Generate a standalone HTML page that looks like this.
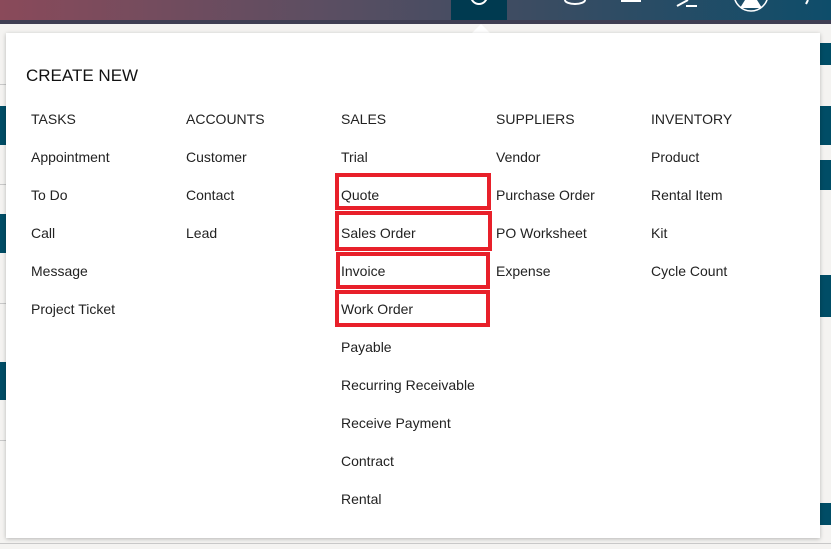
<!DOCTYPE html>
<html><head><meta charset="utf-8"><style>
*{margin:0;padding:0;box-sizing:border-box}
body{width:831px;height:549px;overflow:hidden;background:#f4f3f1;font-family:"Liberation Sans",sans-serif;position:relative}
.top{position:absolute;left:0;top:0;width:831px;height:20px;background:linear-gradient(90deg,#8a4a5a,#5a4e62 40%,#3a4c62 65%,#0e4d6a)}
.strip{position:absolute;left:0;top:20px;width:831px;height:4px;background:#3f3e52}
.act{position:absolute;left:451px;top:0;width:56px;height:20px;background:#003a50}
.b{position:absolute;background:#004d66}
.l{position:absolute;height:1px;background:#c8c8c8}
.pop{position:absolute;left:6px;top:33px;width:814px;height:505px;background:#fff;box-shadow:0 1px 4px rgba(0,0,0,.25)}
.arrow{position:absolute;left:472px;top:24px;width:0;height:0;border-left:9px solid transparent;border-right:9px solid transparent;border-bottom:9px solid #fff}
.t{position:absolute;font-size:14px;color:#222;white-space:nowrap}
h1{position:absolute;left:26px;top:66px;font-size:17px;font-weight:normal;color:#111}
.r{position:absolute;border:4px solid #e8202a}
</style></head><body>
<div class="top"></div><div class="strip"></div><div class="act"></div>
<svg style="position:absolute;left:0;top:0" width="831" height="20">
<g fill="none" stroke="#fff" stroke-width="2">
<path d="M471 -4 A8 8 0 0 0 487 -4"/>
<path d="M565 0 A10 4 0 0 0 585 0"/>
<line x1="621" y1="1" x2="641" y2="1"/>
<path d="M677 6 L688 0 M686 6 L697 6"/>
<ellipse cx="751" cy="-6" rx="17" ry="17" stroke-width="1.5"/>
<path d="M806 4 L808 0"/>
</g>
<path d="M740 8 L745 0 L757 0 L762 8 Z" fill="#fff"/>
</svg>
<div class="b" style="left:0;top:106px;width:8px;height:39px"></div>
<div class="b" style="left:0;top:214px;width:8px;height:39px"></div>
<div class="b" style="left:0;top:362px;width:8px;height:38px"></div>
<div class="b" style="left:820px;top:43px;width:11px;height:22px"></div>
<div class="b" style="left:820px;top:106px;width:11px;height:39px"></div>
<div class="b" style="left:820px;top:160px;width:11px;height:30px"></div>
<div class="b" style="left:820px;top:275px;width:11px;height:42px"></div>
<div class="b" style="left:820px;top:503px;width:11px;height:22px"></div>
<div class="l" style="left:0;top:84px;width:8px"></div>
<div class="l" style="left:0;top:184px;width:8px"></div>
<div class="l" style="left:0;top:303px;width:8px"></div>
<div class="l" style="left:0;top:440px;width:8px"></div>
<div class="l" style="left:0;top:543px;width:831px"></div>
<div class="arrow"></div>
<div class="pop"></div>
<h1>CREATE NEW</h1>
<div class="t" style="left:31px;top:111px">TASKS</div>
<div class="t" style="left:31px;top:149px">Appointment</div>
<div class="t" style="left:31px;top:187px">To Do</div>
<div class="t" style="left:31px;top:225px">Call</div>
<div class="t" style="left:31px;top:263px">Message</div>
<div class="t" style="left:31px;top:301px">Project Ticket</div>
<div class="t" style="left:186px;top:111px">ACCOUNTS</div>
<div class="t" style="left:186px;top:149px">Customer</div>
<div class="t" style="left:186px;top:187px">Contact</div>
<div class="t" style="left:186px;top:225px">Lead</div>
<div class="t" style="left:341px;top:111px">SALES</div>
<div class="t" style="left:341px;top:149px">Trial</div>
<div class="t" style="left:341px;top:187px">Quote</div>
<div class="t" style="left:341px;top:225px">Sales Order</div>
<div class="t" style="left:341px;top:263px">Invoice</div>
<div class="t" style="left:341px;top:301px">Work Order</div>
<div class="t" style="left:341px;top:339px">Payable</div>
<div class="t" style="left:341px;top:377px">Recurring Receivable</div>
<div class="t" style="left:341px;top:415px">Receive Payment</div>
<div class="t" style="left:341px;top:453px">Contract</div>
<div class="t" style="left:341px;top:491px">Rental</div>
<div class="t" style="left:496px;top:111px">SUPPLIERS</div>
<div class="t" style="left:496px;top:149px">Vendor</div>
<div class="t" style="left:496px;top:187px">Purchase Order</div>
<div class="t" style="left:496px;top:225px">PO Worksheet</div>
<div class="t" style="left:496px;top:263px">Expense</div>
<div class="t" style="left:651px;top:111px">INVENTORY</div>
<div class="t" style="left:651px;top:149px">Product</div>
<div class="t" style="left:651px;top:187px">Rental Item</div>
<div class="t" style="left:651px;top:225px">Kit</div>
<div class="t" style="left:651px;top:263px">Cycle Count</div>
<div class="r" style="left:335px;top:173px;width:156px;height:37px"></div>
<div class="r" style="left:335px;top:211px;width:157px;height:40px"></div>
<div class="r" style="left:336px;top:252px;width:154px;height:37px"></div>
<div class="r" style="left:335px;top:290px;width:155px;height:37px"></div>
</body></html>
